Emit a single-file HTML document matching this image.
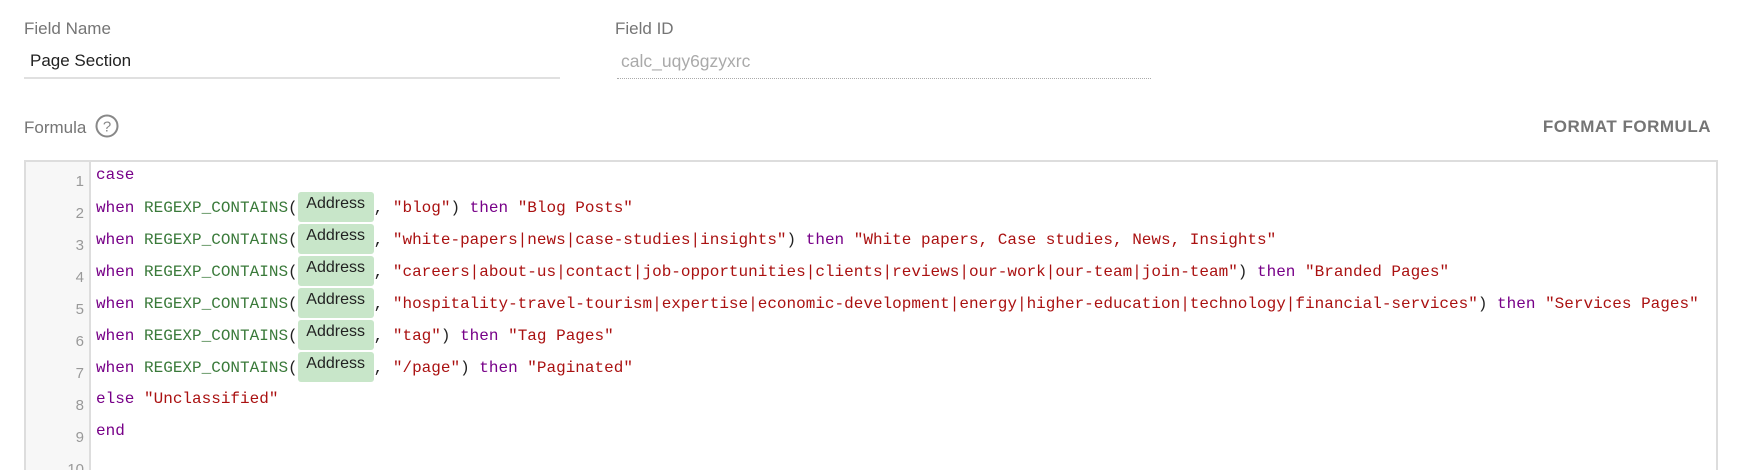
<!DOCTYPE html>
<html><head><meta charset="utf-8"><style>
html,body{margin:0;width:1738px;height:470px;overflow:hidden}
body{background:#fff;font-family:"Liberation Sans",sans-serif;position:relative}
.a{position:absolute;white-space:nowrap}
.lbl{color:#757575;font-size:17px}
.ed{position:absolute;left:24px;top:160px;width:1690px;height:308px;border:2px solid #ddd;border-bottom:none;overflow:hidden}
.gut{position:absolute;left:0;top:0;width:63px;height:100%;background:#f7f7f7;border-right:2px solid #ddd}
.ln{position:absolute;left:0;width:58px;text-align:right;color:#999;font-size:15px}
.cl{position:absolute;left:70px;font-family:"Liberation Mono",monospace;font-size:16px;white-space:pre;height:32px;line-height:30px;color:#222}
.k{color:#770088}.f{color:#3a7a3a}.s{color:#aa1111}
.c{display:inline-block;background:#c8e6c9;border-radius:3px;font-family:"Liberation Sans",sans-serif;font-size:16px;color:#222;width:76px;height:30px;line-height:24px;text-align:center;vertical-align:top;margin-top:-1px}
</style></head><body>
<div class="a lbl" style="left:24px;top:19px">Field Name</div>
<div class="a" style="left:30px;top:51px;font-size:17px;color:#222">Page Section</div>
<div class="a" style="left:24px;top:77px;width:536px;height:2px;background:#e0e0e0"></div>
<div class="a lbl" style="left:615px;top:19px">Field ID</div>
<div class="a" style="left:621px;top:51px;font-size:17.5px;color:#aaa">calc_uqy6gzyxrc</div>
<div class="a" style="left:617px;top:78px;width:534px;border-top:1px dotted #aaa"></div>
<div class="a lbl" style="left:24px;top:118px">Formula</div>
<svg class="a" style="left:95px;top:114px" width="24" height="24" viewBox="0 0 24 24"><circle cx="12" cy="12" r="10.5" fill="none" stroke="#888" stroke-width="2"/><text x="12" y="17.5" text-anchor="middle" font-family="Liberation Sans" font-size="15" fill="#888">?</text></svg>
<div class="a" style="right:27px;top:117px;font-size:17px;color:#757575;font-weight:bold;letter-spacing:0.5px">FORMAT FORMULA</div>
<div class="ed"><div class="gut"></div>
<div class="ln" style="top:11px">1</div><div class="ln" style="top:43px">2</div><div class="ln" style="top:75px">3</div><div class="ln" style="top:107px">4</div><div class="ln" style="top:139px">5</div><div class="ln" style="top:171px">6</div><div class="ln" style="top:203px">7</div><div class="ln" style="top:235px">8</div><div class="ln" style="top:267px">9</div><div class="ln" style="top:299px">10</div>
<div class="cl" style="top:-2px"><span class="k">case</span></div>
<div class="cl" style="top:31px"><span class="k">when</span> <span class="f">REGEXP_CONTAINS</span>(<span class="c">Address</span>, <span class="s">"blog"</span>) <span class="k">then</span> <span class="s">"Blog Posts"</span></div>
<div class="cl" style="top:63px"><span class="k">when</span> <span class="f">REGEXP_CONTAINS</span>(<span class="c">Address</span>, <span class="s">"white-papers|news|case-studies|insights"</span>) <span class="k">then</span> <span class="s">"White papers, Case studies, News, Insights"</span></div>
<div class="cl" style="top:95px"><span class="k">when</span> <span class="f">REGEXP_CONTAINS</span>(<span class="c">Address</span>, <span class="s">"careers|about-us|contact|job-opportunities|clients|reviews|our-work|our-team|join-team"</span>) <span class="k">then</span> <span class="s">"Branded Pages"</span></div>
<div class="cl" style="top:127px"><span class="k">when</span> <span class="f">REGEXP_CONTAINS</span>(<span class="c">Address</span>, <span class="s">"hospitality-travel-tourism|expertise|economic-development|energy|higher-education|technology|financial-services"</span>) <span class="k">then</span> <span class="s">"Services Pages"</span></div>
<div class="cl" style="top:159px"><span class="k">when</span> <span class="f">REGEXP_CONTAINS</span>(<span class="c">Address</span>, <span class="s">"tag"</span>) <span class="k">then</span> <span class="s">"Tag Pages"</span></div>
<div class="cl" style="top:191px"><span class="k">when</span> <span class="f">REGEXP_CONTAINS</span>(<span class="c">Address</span>, <span class="s">"/page"</span>) <span class="k">then</span> <span class="s">"Paginated"</span></div>
<div class="cl" style="top:222px"><span class="k">else</span> <span class="s">"Unclassified"</span></div>
<div class="cl" style="top:254px"><span class="k">end</span></div>
</div>
</body></html>
